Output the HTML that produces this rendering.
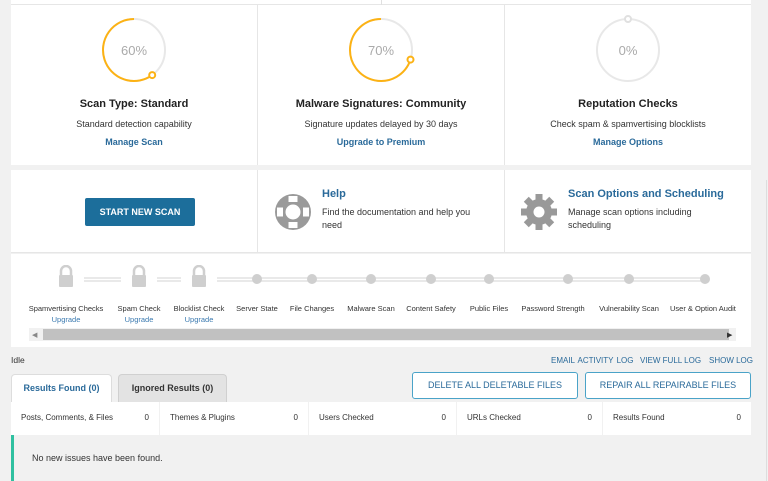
<!DOCTYPE html>
<html><head><meta charset="utf-8"><style>
*{margin:0;padding:0;box-sizing:border-box}
body{width:768px;height:481px;overflow:hidden;background:#f1f1f1;font-family:"Liberation Sans",sans-serif;position:relative;color:#2d2d2d}
.a{position:absolute}
.w{background:#fff}
.c{text-align:center}
.t{font-size:11px;font-weight:bold;color:#222}
.s{font-size:9px;color:#333}
.l{font-size:9px;font-weight:bold;color:#2a6a9a}
.lab{position:absolute;top:304px;font-size:7.5px;color:#333;white-space:nowrap;text-align:center;transform:translateX(-50%)}
.lab span{display:block;color:#3b7ab0;margin-top:2px}
.st{position:absolute;top:402px;height:33px;background:#fff;font-size:8px;color:#333;padding:11px 10px 0 10px;display:flex;justify-content:space-between}
</style></head><body>
<div class="a w" style="left:11px;top:0;width:740px;height:5px;border-bottom:1px solid #e6e6e6"></div>
<div class="a" style="left:381px;top:0;width:1px;height:5px;background:#e0e0e0"></div>
<!-- row 1 -->
<div class="a w" style="left:11px;top:5px;width:740px;height:160px"></div>
<div class="a" style="left:257px;top:5px;width:1px;height:160px;background:#e6e6e6"></div>
<div class="a" style="left:504px;top:5px;width:1px;height:160px;background:#e6e6e6"></div>
<svg class="a" style="left:0;top:0" width="768" height="170">
<g fill="none" stroke-width="2">
<circle cx="134" cy="50" r="31" stroke="#e8e8e8"/>
<path d="M134 19 A31 31 0 1 0 152.2 75.1" stroke="#fcb214"/>
<circle cx="152.2" cy="75.1" r="3" fill="#fff" stroke="#fcb214"/>
<circle cx="381" cy="50" r="31" stroke="#e8e8e8"/>
<path d="M381 19 A31 31 0 1 0 410.5 59.6" stroke="#fcb214"/>
<circle cx="410.5" cy="59.6" r="3" fill="#fff" stroke="#fcb214"/>
<circle cx="628" cy="50" r="31" stroke="#e8e8e8"/>
<circle cx="628" cy="19" r="3" fill="#fff" stroke="#e0e0e0"/>
</g>
<g font-family="Liberation Sans" font-size="13" fill="#aaa" text-anchor="middle">
<text x="134" y="55">60%</text><text x="381" y="55">70%</text><text x="628" y="55">0%</text></g>
</svg>
<div class="a c t" style="left:11px;top:98px;width:246px">Scan Type: Standard</div>
<div class="a c s" style="left:11px;top:119px;width:246px">Standard detection capability</div>
<div class="a c l" style="left:11px;top:137px;width:246px">Manage Scan</div>
<div class="a c t" style="left:258px;top:98px;width:246px">Malware Signatures: Community</div>
<div class="a c s" style="left:258px;top:119px;width:246px">Signature updates delayed by 30 days</div>
<div class="a c l" style="left:258px;top:137px;width:246px">Upgrade to Premium</div>
<div class="a c t" style="left:505px;top:98px;width:246px">Reputation Checks</div>
<div class="a c s" style="left:505px;top:119px;width:246px">Check spam &amp; spamvertising blocklists</div>
<div class="a c l" style="left:505px;top:137px;width:246px">Manage Options</div>
<!-- row 2 -->
<div class="a w" style="left:11px;top:170px;width:740px;height:83px;border-bottom:1px solid #e6e6e6"></div>
<div class="a" style="left:257px;top:170px;width:1px;height:83px;background:#e6e6e6"></div>
<div class="a" style="left:504px;top:170px;width:1px;height:83px;background:#e6e6e6"></div>
<div class="a c" style="left:85px;top:198px;width:110px;height:28px;background:#1c6e9b;border-radius:2px;color:#fff;font-size:9px;font-weight:bold;line-height:28px">START NEW SCAN</div>
<svg class="a" style="left:274px;top:193px" width="38" height="38" viewBox="-19 -19 38 38">
<circle r="18" fill="#9a9a9a"/>
<circle r="7.5" fill="#fff"/>
<g fill="#fff">
<rect x="-4.5" y="-16" width="9" height="6"/>
<rect x="-4.5" y="10" width="9" height="6"/>
<rect x="-16" y="-4.5" width="6" height="9"/>
<rect x="10" y="-4.5" width="6" height="9"/>
</g>
</svg>
<svg class="a" style="left:521px;top:194px" width="36" height="36" viewBox="-18 -18 36 36">
<g fill="#999"><circle r="13"/>
<rect x="-3.5" y="-18" width="7" height="36"/>
<rect x="-3.5" y="-18" width="7" height="36" transform="rotate(45)"/>
<rect x="-3.5" y="-18" width="7" height="36" transform="rotate(90)"/>
<rect x="-3.5" y="-18" width="7" height="36" transform="rotate(135)"/></g>
<circle r="5.5" fill="#fff"/>
</svg>
<div class="a" style="left:322px;top:188px;font-size:11px;font-weight:bold;color:#2a6a9a">Help</div>
<div class="a" style="left:322px;top:206px;width:165px;font-size:9px;color:#333;line-height:13px">Find the documentation and help you need</div>
<div class="a" style="left:568px;top:188px;font-size:11px;font-weight:bold;color:#2a6a9a">Scan Options and Scheduling</div>
<div class="a" style="left:568px;top:206px;width:160px;font-size:9px;color:#333;line-height:13px">Manage scan options including scheduling</div>
<!-- progress -->
<div class="a w" style="left:11px;top:254px;width:740px;height:93px"></div>
<svg class="a" style="left:0;top:265px" width="768" height="30">
<g stroke="#e2e2e2" stroke-width="1.5">
<line x1="84" y1="13" x2="121" y2="13"/><line x1="84" y1="16" x2="121" y2="16"/>
<line x1="157" y1="13" x2="181" y2="13"/><line x1="157" y1="16" x2="181" y2="16"/>
<line x1="217" y1="13" x2="705" y2="13"/><line x1="217" y1="16" x2="705" y2="16"/></g>
<g fill="#cfcfcf">
<g transform="translate(66,0)"><rect x="-7" y="10" width="14" height="12" rx="1"/><path d="M-5 11 V6 a5 5 0 0 1 10 0 V11" fill="none" stroke="#cfcfcf" stroke-width="2.5"/></g>
<g transform="translate(139,0)"><rect x="-7" y="10" width="14" height="12" rx="1"/><path d="M-5 11 V6 a5 5 0 0 1 10 0 V11" fill="none" stroke="#cfcfcf" stroke-width="2.5"/></g>
<g transform="translate(199,0)"><rect x="-7" y="10" width="14" height="12" rx="1"/><path d="M-5 11 V6 a5 5 0 0 1 10 0 V11" fill="none" stroke="#cfcfcf" stroke-width="2.5"/></g>
<circle cx="257" cy="14" r="5"/><circle cx="312" cy="14" r="5"/><circle cx="371" cy="14" r="5"/><circle cx="431" cy="14" r="5"/><circle cx="489" cy="14" r="5"/><circle cx="568" cy="14" r="5"/><circle cx="629" cy="14" r="5"/><circle cx="705" cy="14" r="5"/></g>
</svg>
<div class="lab" style="left:66px">Spamvertising Checks<span>Upgrade</span></div>
<div class="lab" style="left:139px">Spam Check<span>Upgrade</span></div>
<div class="lab" style="left:199px">Blocklist Check<span>Upgrade</span></div>
<div class="lab" style="left:257px">Server State</div>
<div class="lab" style="left:312px">File Changes</div>
<div class="lab" style="left:371px">Malware Scan</div>
<div class="lab" style="left:431px">Content Safety</div>
<div class="lab" style="left:489px">Public Files</div>
<div class="lab" style="left:553px">Password Strength</div>
<div class="lab" style="left:629px">Vulnerability Scan</div>
<div class="a" style="left:670px;top:304px;font-size:7.5px;color:#333;white-space:nowrap;width:66px;overflow:hidden">User &amp; Option Audit</div>
<div class="a" style="left:29px;top:328px;width:707px;height:13px;background:#f1f1f1"></div>
<div class="a" style="left:43px;top:329px;width:686px;height:11px;background:#c1c1c1"></div>
<div class="a" style="left:32px;top:331px;font-size:7px;color:#888">◀</div>
<div class="a" style="left:727px;top:331px;font-size:7px;color:#333">▶</div>
<!-- idle -->
<div class="a" style="left:11px;top:355px;font-size:8.5px;color:#333">Idle</div>
<div class="a" style="left:551px;top:356px;font-size:8px;color:#2a6a9a;word-spacing:1px">EMAIL ACTIVITY LOG</div>
<div class="a" style="left:640px;top:356px;font-size:8px;color:#2a6a9a">VIEW FULL LOG</div>
<div class="a" style="left:709px;top:356px;font-size:8px;color:#2a6a9a">SHOW LOG</div>
<!-- tabs -->
<div class="a c" style="left:11px;top:374px;width:101px;height:29px;background:#fff;border:1px solid #ddd;border-bottom:none;border-radius:4px 4px 0 0;font-size:9px;font-weight:bold;color:#2a6a9a;line-height:27px">Results Found (0)</div>
<div class="a c" style="left:118px;top:374px;width:109px;height:28px;background:#e3e3e3;border:1px solid #d0d0d0;border-bottom:none;border-radius:4px 4px 0 0;font-size:9px;font-weight:bold;color:#333;line-height:27px">Ignored Results (0)</div>
<div class="a c" style="left:412px;top:372px;width:166px;height:27px;background:#fff;border:1px solid #4aa3c8;border-radius:3px;font-size:9px;color:#2a6a9a;line-height:25px">DELETE ALL DELETABLE FILES</div>
<div class="a c" style="left:585px;top:372px;width:166px;height:27px;background:#fff;border:1px solid #4aa3c8;border-radius:3px;font-size:9px;color:#2a6a9a;line-height:25px">REPAIR ALL REPAIRABLE FILES</div>
<div class="st" style="left:11px;width:148px"><span>Posts, Comments, &amp; Files</span><span>0</span></div>
<div class="st" style="left:160px;width:148px"><span>Themes &amp; Plugins</span><span>0</span></div>
<div class="st" style="left:309px;width:147px"><span>Users Checked</span><span>0</span></div>
<div class="st" style="left:457px;width:145px"><span>URLs Checked</span><span>0</span></div>
<div class="st" style="left:603px;width:148px"><span>Results Found</span><span>0</span></div>
<div class="a" style="left:11px;top:435px;width:740px;height:46px;background:#f1f1f1;border-left:3px solid #2fc0a0"></div>
<div class="a" style="left:32px;top:453px;font-size:9px;color:#333">No new issues have been found.</div>
<div class="a" style="left:766px;top:180px;width:1px;height:301px;background:#ddd"></div>
</body></html>
